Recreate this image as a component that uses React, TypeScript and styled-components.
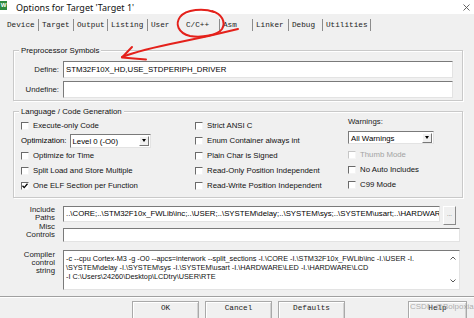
import React from 'react'
import styled, { createGlobalStyle } from 'styled-components'

const GlobalStyle = createGlobalStyle`
  html, body { margin: 0; padding: 0; background: #f0f0f0; }
  body { font-family: 'Liberation Sans', Arial, sans-serif; }
`

const Window = styled.div`
  position: relative;
  width: 474px;
  height: 318px;
  overflow: hidden;
  background: #f0f0f0;
  display: flex;
  flex-direction: column;
  font-family: 'Liberation Sans', Arial, sans-serif;
  font-size: 7.8px;
  color: #000;
`

const TitleBar = styled.div`
  flex: none;
  height: 14px;
  background: #fff;
  display: flex;
  align-items: center;
`

const AppIcon = styled.span`
  width: 7px;
  height: 9px;
  margin-top: -3px;
  background: #2e8b3e;
  color: #fff;
  font: bold 6px/9px 'Liberation Sans', sans-serif;
  text-align: center;
`

const Title = styled.span`
  margin-left: 9px;
  font-family: 'Noto Sans', 'Liberation Sans', sans-serif;
  font-size: 9px;
  color: #111;
`

const CloseBtn = styled.svg`
  margin-left: auto;
  margin-right: 4px;
`

const TabStrip = styled.div`
  flex: none;
  height: 22px;
  display: flex;
  align-items: center;
  padding-left: 4px;
  font-family: 'Liberation Mono', 'Courier New', monospace;
  font-size: 7.7px;
  color: #222;
`

const Tab = styled.div<{ $w: number; $sep?: boolean; $pad?: number }>`
  box-sizing: border-box;
  width: ${p => p.$w}px;
  height: 12px;
  line-height: 12px;
  padding-left: ${p => p.$pad ?? 3}px;
  border-right: 1px solid ${p => (p.$sep ? '#8c8c8c' : 'transparent')};
  white-space: nowrap;
`

const Page = styled.div`
  box-sizing: border-box;
  flex: none;
  height: 261px;
  padding: 0 11px 0 13px;
  border-bottom: 1px solid #a0a0a0;
  box-shadow: 0 1px 0 #fff;
  display: flex;
  flex-direction: column;
`

const GroupBox = styled.div<{ $mt: number; $pb: number }>`
  margin-top: ${p => p.$mt}px;
  padding-bottom: ${p => p.$pb}px;
  border: 1px solid #c9c9c9;
  box-shadow: inset 1px 1px 0 #fff, 1px 1px 0 #fff;
`

const Legend = styled.div`
  width: fit-content;
  margin: -6px 0 0 5px;
  padding: 0 2px;
  height: 11px;
  line-height: 11px;
  background: #f0f0f0;
  color: #111;
`

const SymbolGrid = styled.div`
  display: grid;
  grid-template-columns: 45px 1fr;
  column-gap: 4px;
  row-gap: 3px;
  margin-top: 5px;
  padding-right: 9px;
`

const RightLabel = styled.div`
  align-self: center;
  text-align: right;
  color: #222;
`

const TextBox = styled.div<{ $h: number }>`
  box-sizing: border-box;
  height: ${p => p.$h}px;
  background: #fff;
  border: 1px solid;
  border-color: #7a7a7a #e3e3e3 #e3e3e3 #7a7a7a;
  padding-left: 2px;
  line-height: ${p => p.$h - 2}px;
  white-space: nowrap;
  overflow: hidden;
`

const CodeGrid = styled.div`
  display: grid;
  grid-template-columns: 174px 153px 1fr;
  margin-top: 1px;
  padding-left: 7px;
`

const Column = styled.div`
  display: flex;
  flex-direction: column;
`

const CheckRow = styled.div<{ $disabled?: boolean }>`
  display: flex;
  align-items: center;
  gap: 4px;
  height: 15px;
  color: ${p => (p.$disabled ? '#a3a3a3' : '#111')};
  white-space: nowrap;
`

const Box = styled.span<{ $disabled?: boolean }>`
  box-sizing: border-box;
  flex: none;
  width: 8px;
  height: 8px;
  background: #fff;
  border: 1px solid;
  border-color: ${p =>
    p.$disabled ? '#c6c6c6 #f6f6f6 #f6f6f6 #c6c6c6' : '#6a6a6a #f4f4f4 #f4f4f4 #6a6a6a'};
  display: flex;
  align-items: center;
  justify-content: center;
`

const SelectRow = styled.div`
  display: flex;
  align-items: center;
  gap: 3px;
  height: 15px;
  white-space: nowrap;
`

const Select = styled.div<{ $w: number }>`
  box-sizing: border-box;
  width: ${p => p.$w}px;
  height: 14px;
  background: #fff;
  border: 1px solid;
  border-color: #7a7a7a #e3e3e3 #e3e3e3 #7a7a7a;
  display: flex;
  align-items: center;
  padding-left: 2px;
`

const SelectValue = styled.span`
  flex: 1;
  padding-top: 2px;
`

const DropBtn = styled.span`
  box-sizing: border-box;
  width: 10px;
  height: 10px;
  margin-right: 1px;
  background: #f0f0f0;
  border: 1px solid;
  border-color: #fff #777 #777 #fff;
  display: flex;
  align-items: center;
  justify-content: center;
  &::after {
    content: '';
    border-left: 2.5px solid transparent;
    border-right: 2.5px solid transparent;
    border-top: 3px solid #000;
  }
`

const WarnLabel = styled.div`
  height: 8px;
  line-height: 8px;
  color: #222;
`

const WarnSelect = styled(Select)`
  height: 13px;
  margin: 5px 0 3px;
`

const FieldRow = styled.div<{ $mt: number }>`
  display: flex;
  align-items: flex-start;
  margin-top: ${p => p.$mt}px;
  padding-right: 3px;
`

const FieldLabel = styled.div<{ $lift: number }>`
  flex: none;
  width: 42px;
  margin-right: 8px;
  margin-top: ${p => p.$lift}px;
  text-align: right;
  line-height: 8px;
  color: #222;
`

const Grow = styled.div`
  flex: 1;
  min-width: 0;
`

const BrowseBtn = styled.div`
  box-sizing: border-box;
  flex: none;
  width: 13px;
  height: 19px;
  margin: 0 4px 0 3px;
  background: #f0f0f0;
  border: 1px solid;
  border-color: #fff #8a8a8a #8a8a8a #fff;
  font-size: 6px;
  line-height: 14px;
  text-align: center;
  color: #555;
  overflow: hidden;
`

const Memo = styled.div`
  box-sizing: border-box;
  flex: 1;
  height: 40px;
  background: #fff;
  border: 1px solid;
  border-color: #7a7a7a #e3e3e3 #e3e3e3 #7a7a7a;
  display: flex;
`

const MemoText = styled.div`
  flex: 1;
  min-width: 0;
  padding: 3px 0 0 2px;
  font-size: 7.3px;
  line-height: 9px;
  white-space: pre;
  overflow: hidden;
  color: #111;
`

const ScrollCol = styled.div`
  flex: none;
  width: 12px;
  display: flex;
  flex-direction: column;
  justify-content: space-between;
  align-items: center;
  padding: 5px 0 6px;
`

const ButtonRow = styled.div`
  flex: 1;
  display: flex;
  align-items: flex-start;
  gap: 6px;
  padding: 4px 0 0 132px;
`

const DlgButton = styled.div<{ $w: number; $push?: boolean }>`
  box-sizing: border-box;
  width: ${p => p.$w}px;
  height: 20px;
  margin-left: ${p => (p.$push ? 'auto' : '0')};
  margin-right: ${p => (p.$push ? '7px' : '0')};
  background: #f0f0f0;
  border: 1px solid #a9a9a9;
  box-shadow: inset 1px 1px 0 #fff, inset -1px -1px 0 #d2d2d2;
  font-family: 'Liberation Mono', 'Courier New', monospace;
  font-size: 7.7px;
  line-height: 11px;
  padding-top: 1px;
  text-align: center;
  color: #222;
`

const Watermark = styled.span`
  position: absolute;
  left: 410px;
  top: 302px;
  font-size: 8px;
  color: rgba(150, 150, 150, 0.75);
  pointer-events: none;
`

const Scribble = styled.svg`
  position: absolute;
  left: 0;
  top: 0;
  pointer-events: none;
`

type Check = { label: string; checked?: boolean; disabled?: boolean }

const leftChecks: Check[] = [
  { label: 'Optimize for Time' },
  { label: 'Split Load and Store Multiple' },
  { label: 'One ELF Section per Function', checked: true },
]

const midChecks: Check[] = [
  { label: 'Strict ANSI C' },
  { label: 'Enum Container always int' },
  { label: 'Plain Char is Signed' },
  { label: 'Read-Only Position Independent' },
  { label: 'Read-Write Position Independent' },
]

const rightChecks: Check[] = [
  { label: 'Thumb Mode', disabled: true },
  { label: 'No Auto Includes' },
  { label: 'C99 Mode' },
]

const tabs = [
  { name: 'Device', w: 35, sep: true },
  { name: 'Target', w: 35, sep: true },
  { name: 'Output', w: 34, sep: true },
  { name: 'Listing', w: 40, sep: true },
  { name: 'User', w: 24 },
  { name: 'C/C++', w: 48, sep: true, pad: 14 },
  { name: 'Asm', w: 33, sep: true },
  { name: 'Linker', w: 36, sep: true },
  { name: 'Debug', w: 34, sep: true },
  { name: 'Utilities', w: 48, sep: true },
]

// only the part that fits in the edit box is shown in the dialog
const includePaths =
  '..\\CORE;..\\STM32F10x_FWLib\\inc;..\\USER;..\\SYSTEM\\delay;..\\SYSTEM\\sys;..\\SYSTEM\\usart;..\\HARDWAR'

const compilerString = [
  '-c --cpu Cortex-M3 -g -O0 --apcs=interwork --split_sections -I.\\CORE -I.\\STM32F10x_FWLib\\inc -I.\\USER -I.',
  '\\SYSTEM\\delay -I.\\SYSTEM\\sys -I.\\SYSTEM\\usart -I.\\HARDWARE\\LED -I.\\HARDWARE\\LCD',
  '-I C:\\Users\\24260\\Desktop\\LCDtry\\USER\\RTE',
].join('\n')

function CheckItem({ label, checked, disabled }: Check) {
  return (
    <CheckRow $disabled={disabled}>
      <Box $disabled={disabled}>
        {checked && (
          <svg width="6" height="6" viewBox="0 0 6 6">
            <polyline points="0.5,2.8 2.2,4.6 5.5,0.8" fill="none" stroke="#000" strokeWidth="1.3" />
          </svg>
        )}
      </Box>
      {label}
    </CheckRow>
  )
}

export default function App() {
  return (
    <Window>
      <GlobalStyle />
      <TitleBar>
        <AppIcon>W</AppIcon>
        <Title>Options for Target 'Target 1'</Title>
        <CloseBtn width="7" height="7" viewBox="0 0 7 7">
          <path d="M0.5 0.5 L6.5 6.5 M6.5 0.5 L0.5 6.5" stroke="#555" strokeWidth="0.9" />
        </CloseBtn>
      </TitleBar>

      <TabStrip>
        {tabs.map(t => (
          <Tab key={t.name} $w={t.w} $sep={t.sep} $pad={t.pad}>
            {t.name}
          </Tab>
        ))}
      </TabStrip>

      <Page>
        <GroupBox $mt={14} $pb={2}>
          <Legend>Preprocessor Symbols</Legend>
          <SymbolGrid>
            <RightLabel>Define:</RightLabel>
            <TextBox $h={17}>STM32F10X_HD,USE_STDPERIPH_DRIVER</TextBox>
            <RightLabel>Undefine:</RightLabel>
            <TextBox $h={17} />
          </SymbolGrid>
        </GroupBox>

        <GroupBox $mt={10} $pb={4}>
          <Legend>Language / Code Generation</Legend>
          <CodeGrid>
            <Column>
              <CheckItem label="Execute-only Code" />
              <SelectRow>
                Optimization:
                <Select $w={81}>
                  <SelectValue>Level 0 (-O0)</SelectValue>
                  <DropBtn />
                </Select>
              </SelectRow>
              {leftChecks.map(c => (
                <CheckItem key={c.label} {...c} />
              ))}
            </Column>
            <Column>
              {midChecks.map(c => (
                <CheckItem key={c.label} {...c} />
              ))}
            </Column>
            <Column>
              <WarnLabel>Warnings:</WarnLabel>
              <WarnSelect $w={86}>
                <SelectValue>All Warnings</SelectValue>
                <DropBtn />
              </WarnSelect>
              {rightChecks.map(c => (
                <CheckItem key={c.label} {...c} />
              ))}
            </Column>
          </CodeGrid>
        </GroupBox>

        <FieldRow $mt={8}>
          <FieldLabel $lift={0}>
            Include
            <br />
            Paths
          </FieldLabel>
          <Grow>
            <TextBox $h={16}>{includePaths}</TextBox>
          </Grow>
          <BrowseBtn>...</BrowseBtn>
        </FieldRow>

        <FieldRow $mt={3}>
          <FieldLabel $lift={-5}>
            Misc
            <br />
            Controls
          </FieldLabel>
          <Grow>
            <TextBox $h={14} />
          </Grow>
        </FieldRow>

        <FieldRow $mt={8}>
          <FieldLabel $lift={1}>
            Compiler
            <br />
            control
            <br />
            string
          </FieldLabel>
          <Memo>
            <MemoText>{compilerString}</MemoText>
            <ScrollCol>
              <svg width="6" height="4" viewBox="0 0 6 4">
                <polyline points="0.5,3.5 3,1 5.5,3.5" fill="none" stroke="#444" strokeWidth="0.9" />
              </svg>
              <svg width="6" height="4" viewBox="0 0 6 4">
                <polyline points="0.5,0.5 3,3 5.5,0.5" fill="none" stroke="#444" strokeWidth="0.9" />
              </svg>
            </ScrollCol>
          </Memo>
        </FieldRow>
      </Page>

      <ButtonRow>
        <DlgButton $w={67}>OK</DlgButton>
        <DlgButton $w={67}>Cancel</DlgButton>
        <DlgButton $w={67}>Defaults</DlgButton>
        <DlgButton $w={59} $push>
          Help
        </DlgButton>
      </ButtonRow>

      <Watermark>CSDN @Bolpoxia</Watermark>

      {/* red hand-drawn marks around the C/C++ tab */}
      <Scribble width="474" height="318" viewBox="0 0 474 318">
        <g fill="none" stroke="#e4211b" strokeWidth="2" strokeLinecap="round" strokeLinejoin="round">
          <path d="M214 12 C204 8 186 9 180 17 C175 24 178 33 190 36 C202 38 218 35 222 29 C226 22 222 14 212 11" />
          <path d="M238 29 C222 33 200 38 180 42 C160 46 140 50 122 57" />
          <path d="M132 47 L122 57.5 L146 59.5" />
        </g>
      </Scribble>
    </Window>
  )
}
